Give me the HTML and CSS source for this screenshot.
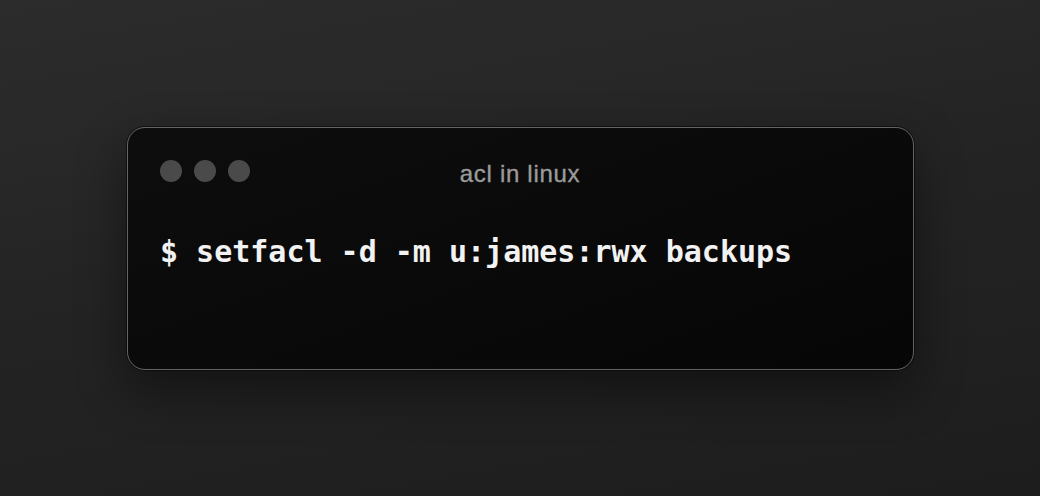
FILE: index.html
```html
<!DOCTYPE html>
<html lang="en">
<head>
<meta charset="utf-8">
<title>acl in linux</title>
<link rel="stylesheet" href="styles.css">
</head>
<body>
<main class="stage">
  <section class="window">
    <header class="bar">
      <div class="dots">
        <span class="dot"></span>
        <span class="dot"></span>
        <span class="dot"></span>
      </div>
      <h1 class="title">acl in linux</h1>
      <div class="spacer"></div>
    </header>
    <pre class="cmd">$ setfacl -d -m u:james:rwx backups</pre>
  </section>
</main>
</body>
</html>
```

FILE: styles.css
```css
html, body {
  margin: 0;
  padding: 0;
  height: 100%;
}
body {
  background: linear-gradient(170deg, #2c2c2c 0%, #242424 45%, #1d1d1d 100%);
}
.stage {
  height: 496px;
  display: flex;
  align-items: center;
  justify-content: center;
}
.window {
  box-sizing: border-box;
  width: 787px;
  height: 243px;
  border: 1.5px solid #646464;
  border-radius: 18px;
  background: linear-gradient(160deg, #0d0d0d 0%, #090909 60%, #060606 100%);
  box-shadow: 0 20px 50px rgba(0, 0, 0, 0.45), 0 0 0 1px rgba(0,0,0,0.5);
  padding: 32.5px 32.5px;
}
.bar {
  display: grid;
  grid-template-columns: 1fr auto 1fr;
  align-items: center;
  height: 22px;
}
.dots {
  display: flex;
  gap: 12px;
}
.dot {
  width: 22px;
  height: 22px;
  border-radius: 50%;
  background: #4a4a4a;
}
.title {
  margin: 0;
  font-family: "Liberation Sans", Arial, sans-serif;
  font-weight: 400;
  font-size: 24px;
  color: #9b9b9b;
  line-height: 22px;
  position: relative;
  top: 3px;
  letter-spacing: 0.7px;
  -webkit-text-stroke: 0.35px #9b9b9b;
}
.cmd {
  margin: 52px 0 0;
  font-family: "DejaVu Sans Mono", "Liberation Mono", monospace;
  font-weight: 700;
  font-size: 30px;
  line-height: 36px;
  color: #f2f2f2;
}
```
